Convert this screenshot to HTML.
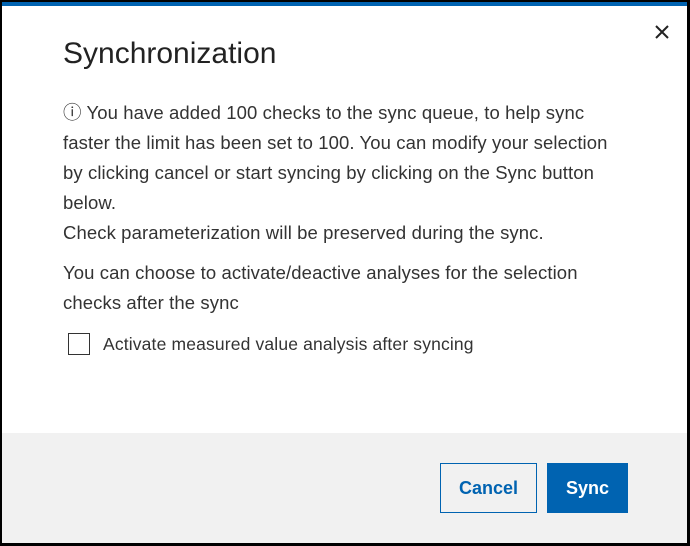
<!DOCTYPE html>
<html><head><style>
*{margin:0;padding:0;box-sizing:border-box}
body{width:690px;height:546px;background:#000;font-family:"Liberation Sans",sans-serif;position:relative;overflow:hidden}
.d{position:absolute;left:2px;top:2px;width:685px;height:541px;background:#fff;border-top:4px solid #0063b1}
.t{position:absolute;left:63px;top:37px;font-size:30px;color:#222}
.x{position:absolute;left:655px;top:25px}
.p{position:absolute;left:63px;font-size:18.5px;letter-spacing:0.1px;color:#333;line-height:30px;width:620px;white-space:nowrap}
.f{position:absolute;top:433px;background:#f1f1f1}
.b{position:absolute;top:463px;height:50px;font-size:18px;font-weight:bold;display:flex;align-items:center;justify-content:center}
.cb{position:absolute;left:68px;top:333px;width:22px;height:22px;border:1.5px solid #333}
</style></head><body>
<div class="d"></div>
<div class="t">Synchronization</div>
<svg class="x" width="14" height="14" viewBox="0 0 14 14"><path d="M1 1L13 13M13 1L1 13" stroke="#222" stroke-width="2"/></svg>
<div class="p" style="top:98px">ⓘ You have added 100 checks to the sync queue, to help sync<br>faster the limit has been set to 100. You can modify your selection<br>by clicking cancel or start syncing by clicking on the Sync button<br>below.<br>Check parameterization will be preserved during the sync.</div>
<div class="p" style="top:258px">You can choose to activate/deactive analyses for the selection<br>checks after the sync</div>
<div class="cb"></div>
<div class="p" style="left:103px;top:329px;font-size:17.5px;letter-spacing:0.15px">Activate measured value analysis after syncing</div>
<div class="f" style="left:2px;right:3px;bottom:3px"></div>
<div class="b" style="left:440px;width:97px;border:1.5px solid #0063b1;color:#0063b1;background:#f1f1f1">Cancel</div>
<div class="b" style="left:547px;width:81px;background:#0063b1;color:#fff">Sync</div>
</body></html>
